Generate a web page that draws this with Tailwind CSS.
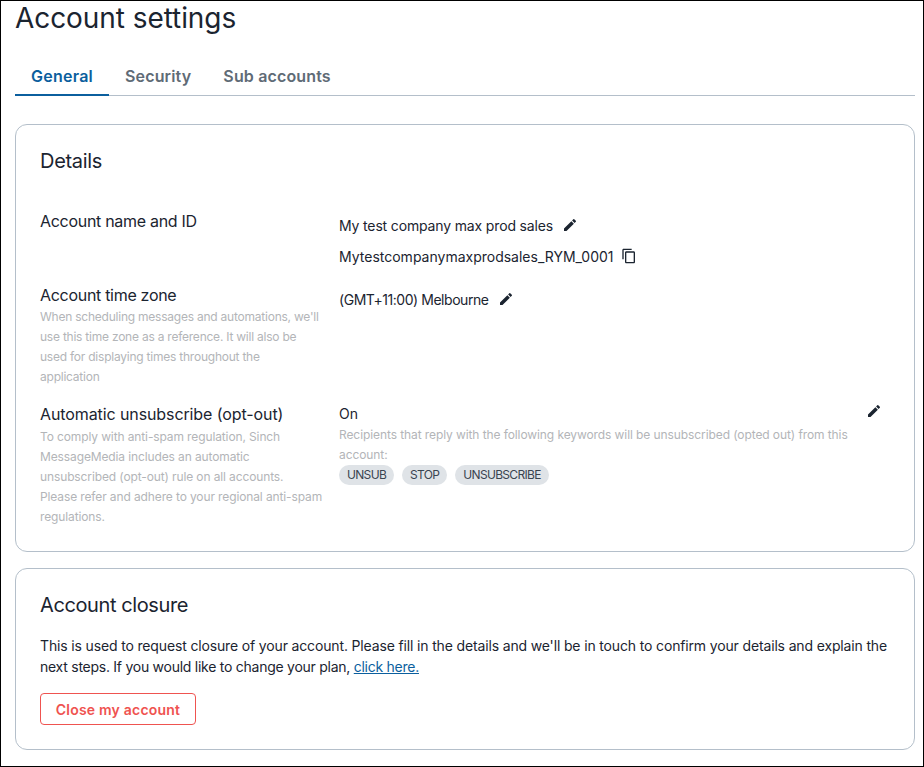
<!DOCTYPE html>
<html lang="en">
<head>
<meta charset="utf-8">
<script src="https://cdn.jsdelivr.net/npm/@tailwindcss/browser@4"></script>
<title>Account settings</title>
</head>
<body class="bg-white">
<div class="w-[924px] h-[767px] overflow-hidden border border-black bg-white text-[#1b2430] font-['Inter','Open_Sans',sans-serif]">
  <div class="pl-[14px] pr-[8px]">
    <h1 class="h-[36px] text-[28px] leading-[34px] font-normal tracking-[-0.07px]">Account settings</h1>
    <nav class="mt-[19px] flex h-[40px] border-b border-[#b4bfca] tracking-[0.15px]">
      <a class="h-[40px] px-4 pt-[8px] leading-[24px] text-[16px] font-semibold tracking-[0.25px] text-[#0b5f9e] border-b-2 border-[#0b5f9e]">General</a>
      <a class="h-[40px] px-4 pt-[8px] leading-[24px] text-[16px] font-semibold text-[#5f6b76]">Security</a>
      <a class="h-[40px] px-4 pt-[8px] leading-[24px] text-[16px] font-semibold text-[#5f6b76]">Sub accounts</a>
    </nav>
    <section class="mt-[28px] h-[428px] w-[900px] rounded-[12px] border border-[#b4bfca] pl-[24px] pr-[24px] pt-[24px]">
      <h2 class="h-[24px] text-[20px] leading-[24px] font-normal tracking-[-0.3px]">Details</h2>
      <div class="mt-[36px] grid grid-cols-[299px_1fr]">
        <div class="h-[74px]">
          <h3 class="text-[16px] leading-[24px] tracking-[-0.3px]">Account name and ID</h3>
        </div>
        <div class="h-[74px] text-[14px]">
          <div class="mt-[4px] flex h-[24px] items-center gap-[9px] tracking-[-0.15px]">My test company max prod sales
            <svg class="size-[16px] text-[#1b2430]" viewBox="0 0 24 24" fill="currentColor"><path d="M3 17.25V21h3.75L17.81 9.94l-3.75-3.75zM20.71 7.04a1 1 0 0 0 0-1.41l-2.34-2.34a1 1 0 0 0-1.41 0l-1.83 1.83 3.75 3.75z"/></svg>
          </div>
          <div class="mt-[7px] flex h-[24px] items-center gap-[7px]">Mytestcompanymaxprodsales_RYM_0001
            <svg class="size-[16px] text-[#1b2430]" viewBox="0 0 24 24" fill="currentColor"><path d="M16 1H4c-1.1 0-2 .9-2 2v14h2V3h12zm3 4H8c-1.1 0-2 .9-2 2v14c0 1.1.9 2 2 2h11c1.1 0 2-.9 2-2V7c0-1.1-.9-2-2-2m0 16H8V7h11z"/></svg>
          </div>
        </div>
        <div class="h-[119px]">
          <h3 class="text-[16px] leading-[24px] tracking-[-0.3px]">Account time zone</h3>
          <p class="w-[281px] text-[12px] leading-[20px] tracking-[-0.23px] text-[#b3b5b8]">When scheduling messages and automations, we'll use this time zone as a reference. It will also be used for displaying times throughout the application</p>
        </div>
        <div class="h-[119px] text-[14px]">
          <div class="mt-[4px] flex h-[24px] items-center gap-[9px] tracking-[-0.45px]">(GMT+11:00) Melbourne
            <svg class="size-[16px] text-[#1b2430]" viewBox="0 0 24 24" fill="currentColor"><path d="M3 17.25V21h3.75L17.81 9.94l-3.75-3.75zM20.71 7.04a1 1 0 0 0 0-1.41l-2.34-2.34a1 1 0 0 0-1.41 0l-1.83 1.83 3.75 3.75z"/></svg>
          </div>
        </div>
        <div>
          <h3 class="text-[16px] leading-[24px] tracking-[-0.1px]">Automatic unsubscribe (opt-out)</h3>
          <p class="mt-[1px] w-[283px] text-[12px] leading-[20px] tracking-[-0.12px] text-[#b3b5b8]">To comply with anti-spam regulation, Sinch MessageMedia includes an automatic unsubscribed (opt-out) rule on all accounts. Please refer and adhere to your regional anti-spam regulations.</p>
        </div>
        <div class="relative">
          <div class="h-[23px] text-[14px] leading-[24px]">On</div>
          <p class="w-[520px] text-[12px] leading-[20px] tracking-[-0.09px] text-[#b3b5b8]">Recipients that reply with the following keywords will be unsubscribed (opted out) from this account:</p>
          <div class="flex gap-[8px] tracking-[-0.68px]">
            <span class="h-[20px] rounded-full bg-[#dfe3e7] px-[8px] text-[12px] leading-[20px] text-[#3a4450]">UNSUB</span>
            <span class="h-[20px] rounded-full bg-[#dfe3e7] px-[8px] text-[12px] leading-[20px] text-[#3a4450]">STOP</span>
            <span class="h-[20px] rounded-full bg-[#dfe3e7] px-[8px] text-[12px] leading-[20px] text-[#3a4450]">UNSUBSCRIBE</span>
          </div>
          <svg class="absolute right-[8px] top-[1px] size-[16px] text-[#1b2430]" viewBox="0 0 24 24" fill="currentColor"><path d="M3 17.25V21h3.75L17.81 9.94l-3.75-3.75zM20.71 7.04a1 1 0 0 0 0-1.41l-2.34-2.34a1 1 0 0 0-1.41 0l-1.83 1.83 3.75 3.75z"/></svg>
        </div>
      </div>
    </section>
    <section class="mt-[16px] h-[182px] w-[900px] rounded-[12px] border border-[#b4bfca] px-[24px] pt-[24px]">
      <h2 class="h-[24px] text-[20px] leading-[24px] font-normal tracking-[-0.4px]">Account closure</h2>
      <p class="mt-[18px] text-[14px] leading-[21px] tracking-[-0.15px]">This is used to request closure of your account. Please fill in the details and we'll be in touch to confirm your details and explain the <span class="tracking-[-0.26px]">next steps. If you would like to change your plan, <a class="text-[#0b5f9e] underline">click here.</a></span></p>
      <button class="mt-[16px] block h-[32px] w-[156px] rounded-[4px] border border-[#ef5350] text-[14px] font-semibold tracking-[0.2px] text-[#ef5350]">Close my account</button>
    </section>
  </div>
</div>
</body>
</html>
